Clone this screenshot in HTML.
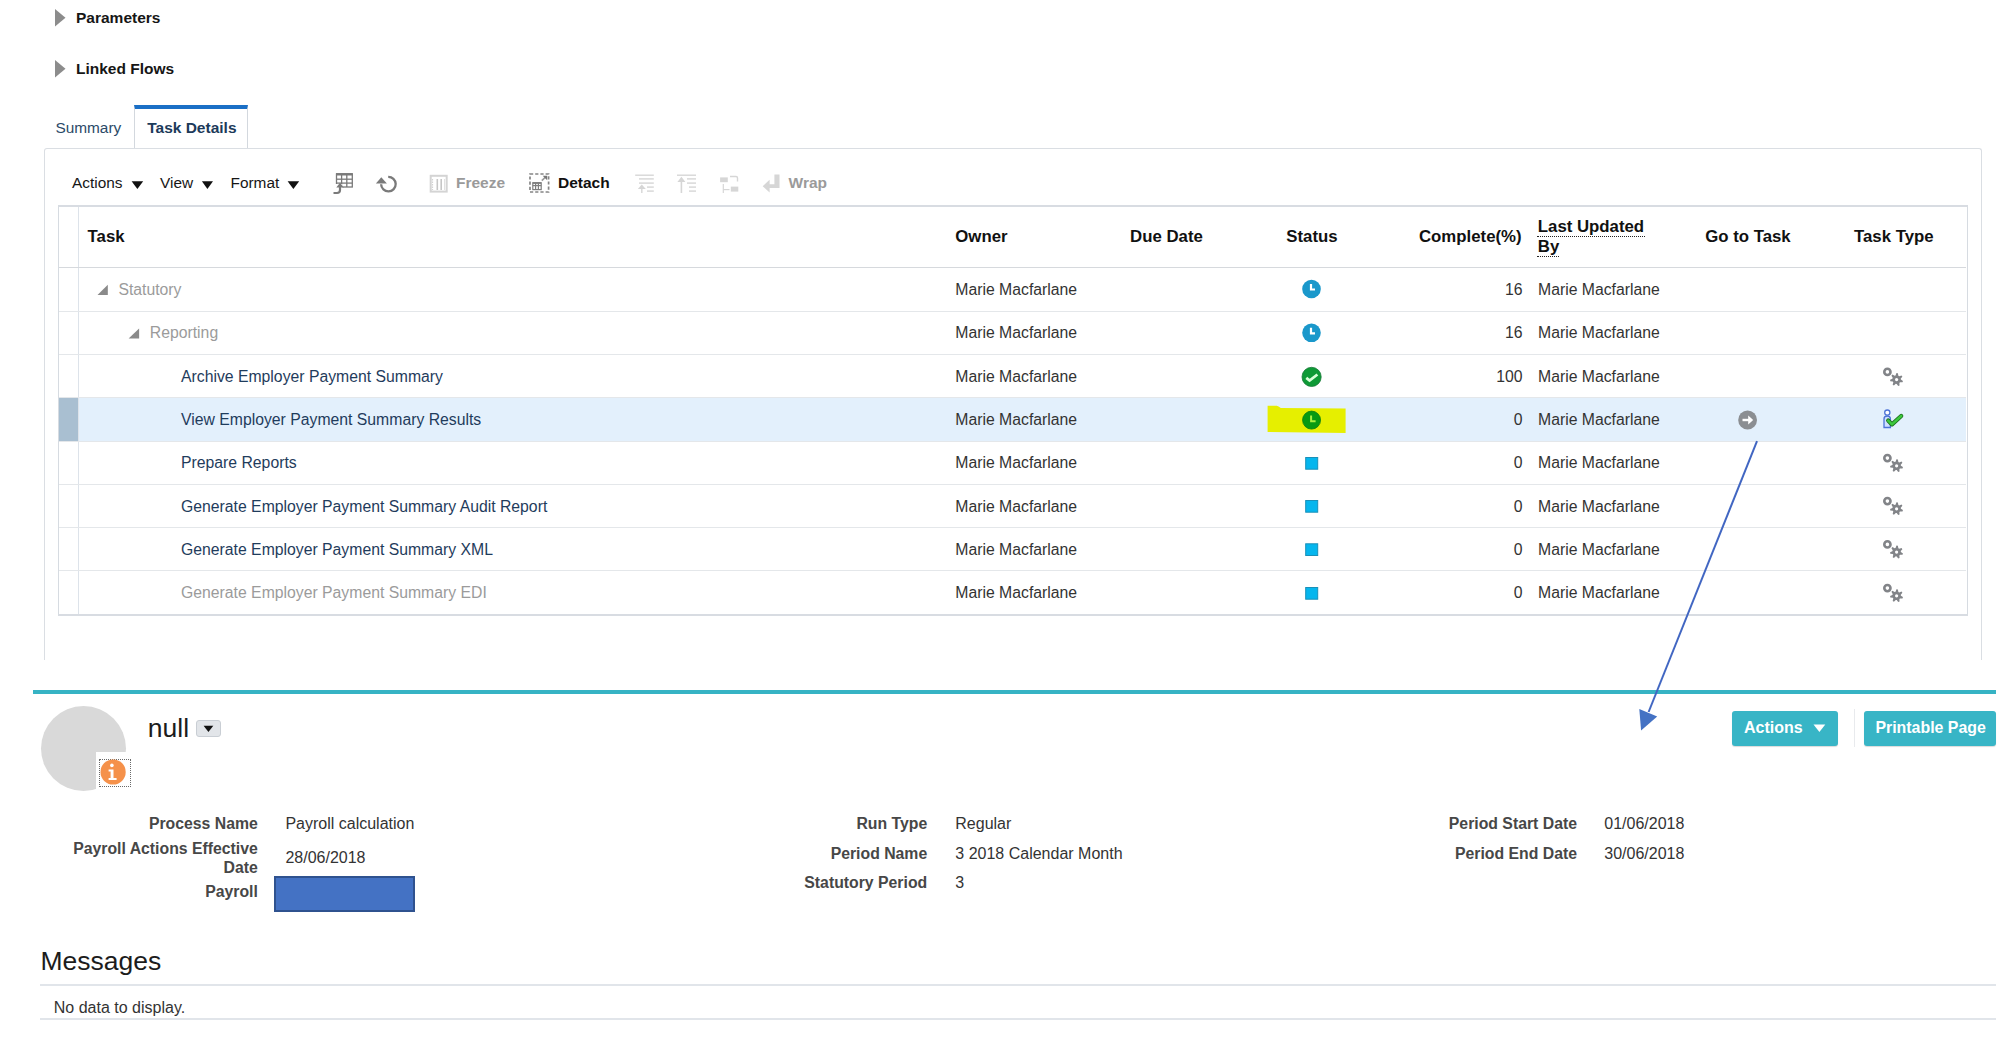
<!DOCTYPE html>
<html><head><meta charset="utf-8">
<style>
*{box-sizing:border-box;margin:0;padding:0}
html,body{width:2016px;height:1053px;overflow:hidden;background:#fff}
body{position:relative;font-family:"Liberation Sans",sans-serif;font-size:16px;color:#333}
.a{position:absolute}
.t{position:absolute;white-space:nowrap;line-height:20px;z-index:5}
.hl{position:absolute;height:1px;background:#e4e7ea}
svg.o{position:absolute;left:0;top:0;overflow:visible;z-index:4}
</style></head><body>

<svg class="o" width="1" height="1"><polygon points="55,9 65.5,17.7 55,26.5" fill="#8c8c8c"/><polygon points="55,60 65.5,68.7 55,77.5" fill="#8c8c8c"/></svg>
<div class="t" style="left:76px;top:8.3px;font-size:15.5px;font-weight:bold;color:#161616;">Parameters</div>
<div class="t" style="left:76px;top:58.7px;font-size:15.5px;font-weight:bold;color:#161616;">Linked Flows</div>
<div class="t" style="left:55.4px;top:118.1px;font-size:15.4px;color:#2c4a68;">Summary</div>
<div class="a" style="left:134px;top:105px;width:114px;height:43px;border:1px solid #d3d8de;border-bottom:none;border-top:4px solid #1a6fc6;background:#fff;z-index:2"></div>
<div class="t" style="left:147.2px;top:118.0px;font-size:15.5px;font-weight:bold;color:#1c3a5a;">Task Details</div>
<div class="a" style="left:44px;top:148px;width:1938px;height:512px;border:1px solid #dadee3;border-bottom:none;border-radius:3px 3px 0 0"></div>
<div class="t" style="left:72px;top:173.2px;font-size:15.4px;color:#161616;">Actions</div>
<div class="t" style="left:160px;top:173.2px;font-size:15.4px;color:#161616;">View</div>
<div class="t" style="left:230.5px;top:173.2px;font-size:15.4px;color:#161616;">Format</div>
<svg class="o" width="1" height="1"><polygon points="131.6,181.3 143.2,181.3 137.4,189" fill="#111"/><polygon points="201.9,181.3 213,181.3 207.4,189" fill="#111"/><polygon points="287.6,181.3 299.2,181.3 293.4,189" fill="#111"/></svg>
<div class="t" style="left:456px;top:173.1px;font-size:15.5px;font-weight:bold;color:#9a9a9a;">Freeze</div>
<div class="t" style="left:558px;top:173.1px;font-size:15.5px;font-weight:bold;color:#111;">Detach</div>
<div class="t" style="left:788.6px;top:173.1px;font-size:15.5px;font-weight:bold;color:#9a9a9a;">Wrap</div>
<svg class="o" width="1" height="1">
<g fill="none" stroke="#7a7a7a">
<rect x="336.5" y="174" width="15.8" height="13" stroke-width="1.3"/>
<line x1="336" y1="174.3" x2="352.8" y2="174.3" stroke-width="2.4"/>
<line x1="336.5" y1="179.2" x2="352.3" y2="179.2" stroke-width="1.3"/>
<line x1="336.5" y1="183.1" x2="352.3" y2="183.1" stroke-width="1.3"/>
<line x1="341.6" y1="174" x2="341.6" y2="187" stroke-width="1.3"/>
<line x1="346.8" y1="174" x2="346.8" y2="187" stroke-width="1.3"/>
</g>
<polygon points="335,184 342.5,184 342.5,189.5 335,189.5" fill="#fff"/>
<path d="M333.5 193 h3.5 q3 0 3 -3 v-4" fill="none" stroke="#7a7a7a" stroke-width="2.2"/>
<polygon points="336.3,187.5 343.7,187.5 340,182.8" fill="#7a7a7a"/>
<path d="M388.2 176.8 A7.3 7.3 0 1 1 381.1 184.3" fill="none" stroke="#7a7a7a" stroke-width="2.3"/>
<polygon points="375.9,183.6 386.9,183.6 381.3,177.2" fill="#7a7a7a"/>
<rect x="430.7" y="175.8" width="16" height="15.8" fill="none" stroke="#d4d4d4" stroke-width="2"/>
<line x1="432.6" y1="179" x2="432.6" y2="190" stroke="#cfcfcf" stroke-width="1" stroke-dasharray="1.5 1"/>
<line x1="437.3" y1="179" x2="437.3" y2="190" stroke="#c6c6c6" stroke-width="1.6"/>
<line x1="441.2" y1="179" x2="441.2" y2="190" stroke="#c6c6c6" stroke-width="1.6"/>
<line x1="444.6" y1="179" x2="444.6" y2="190" stroke="#dedede" stroke-width="1"/>
<rect x="530" y="174" width="18.6" height="18" fill="none" stroke="#858585" stroke-width="1.7" stroke-dasharray="3.2 2"/>
<g fill="none" stroke="#7f7f7f" stroke-width="1.2"><rect x="532.8" y="182.8" width="8.4" height="6.8"/><line x1="532.8" y1="185.6" x2="541.2" y2="185.6"/><line x1="535.6" y1="182.8" x2="535.6" y2="189.6"/><line x1="538.4" y1="182.8" x2="538.4" y2="189.6"/></g>
<line x1="532.8" y1="183" x2="541.2" y2="183" stroke="#7f7f7f" stroke-width="1.8"/>
<line x1="541.8" y1="180.6" x2="545.5" y2="177.2" stroke="#9a9a9a" stroke-width="1.6"/>
<polygon points="547.2,175.8 547.2,180.3 542.7,175.8" fill="#777"/>
<g stroke="#d6d6d6" stroke-width="1.4" fill="none">
<line x1="635.2" y1="175.2" x2="653.8" y2="175.2"/><line x1="639" y1="178.9" x2="653.8" y2="178.9"/><line x1="639" y1="183.1" x2="653.8" y2="183.1"/><line x1="647" y1="187.1" x2="653.8" y2="187.1"/><line x1="647" y1="191.1" x2="653.8" y2="191.1"/>
<line x1="641.8" y1="188" x2="641.8" y2="193"/>
<line x1="677" y1="175.2" x2="696" y2="175.2"/><line x1="687" y1="178.9" x2="696" y2="178.9"/><line x1="687" y1="183.1" x2="696" y2="183.1"/><line x1="689" y1="187.1" x2="696" y2="187.1"/><line x1="689" y1="191.1" x2="696" y2="191.1"/>
<line x1="681.4" y1="181" x2="681.4" y2="193" stroke-width="1.6"/>
<line x1="723.3" y1="184" x2="723.3" y2="193" stroke-width="1.2"/><line x1="723.3" y1="189.6" x2="729.5" y2="189.6" stroke-width="1.2"/>
<path d="M730 176.5 h6 q1.5 0 1.5 1.5 v3.5" stroke-width="1.4"/>
</g>
<polygon points="637.8,189 645.8,189 641.8,184.5" fill="#d6d6d6"/>
<polygon points="677.4,182 685.4,182 681.4,176.8" fill="#d6d6d6"/>
<rect x="720.1" y="177.4" width="7.7" height="4.8" fill="#d6d6d6"/>
<rect x="730.8" y="186.6" width="7.5" height="5" fill="#d6d6d6"/>
<path d="M774.4 174.6 h5.1 v13.4 h-10.8 v-3.8 h5.7 z" fill="#d6d6d6"/>
<polygon points="762.7,186.3 769.6,179.8 769.6,192.4" fill="#d6d6d6"/>
</svg>
<div class="a" style="left:58px;top:205px;width:1910px;height:411px;border:1px solid #d6dbe1;border-top:2px solid #d8dce2;border-bottom:2px solid #d8dce2"></div>
<div class="a" style="left:78px;top:207px;width:1px;height:407px;background:#dde3ea"></div>
<div class="hl" style="left:59px;top:267px;width:1907px;background:#d6d9dd"></div>
<div class="hl" style="left:59px;top:311px;width:1907px;background:#e4e7ea"></div>
<div class="hl" style="left:59px;top:354px;width:1907px;background:#e4e7ea"></div>
<div class="hl" style="left:59px;top:397px;width:1907px;background:#e4e7ea"></div>
<div class="hl" style="left:59px;top:441px;width:1907px;background:#e4e7ea"></div>
<div class="hl" style="left:59px;top:484px;width:1907px;background:#e4e7ea"></div>
<div class="hl" style="left:59px;top:527px;width:1907px;background:#e4e7ea"></div>
<div class="hl" style="left:59px;top:570px;width:1907px;background:#e4e7ea"></div>
<div class="a" style="left:59px;top:398px;width:19px;height:43px;background:#a9bfd1"></div>
<div class="a" style="left:79px;top:398px;width:1887px;height:43px;background:#e3f0fc"></div>
<div class="t" style="left:87.6px;top:226.6px;font-size:16.8px;font-weight:bold;color:#111;">Task</div>
<div class="t" style="left:955.3px;top:226.6px;font-size:16.8px;font-weight:bold;color:#111;">Owner</div>
<div class="t" style="left:1130.1px;top:226.6px;font-size:16.8px;font-weight:bold;color:#111;">Due Date</div>
<div class="t" style="left:1286.3px;top:226.6px;font-size:16.8px;font-weight:bold;color:#111;">Status</div>
<div class="t" style="left:1419px;top:226.6px;font-size:16.8px;font-weight:bold;color:#111;">Complete(%)</div>
<div class="t" style="left:1705.2px;top:226.6px;font-size:16.8px;font-weight:bold;color:#111;">Go to Task</div>
<div class="t" style="left:1854px;top:226.6px;font-size:16.8px;font-weight:bold;color:#111;">Task Type</div>
<div class="t" style="left:1537.8px;top:217.0px;font-size:16.8px;font-weight:bold;color:#111;">Last Updated</div>
<div class="t" style="left:1537.8px;top:236.5px;font-size:16.8px;font-weight:bold;color:#111;">By</div>
<div class="a" style="left:1537px;top:236px;width:108px;height:0;border-top:1px dotted #222"></div>
<div class="a" style="left:1537px;top:256px;width:22px;height:0;border-top:1px dotted #222"></div>
<svg class="o" width="1" height="1"><polygon points="107.8,284.7 107.8,294.9 97.5,294.9" fill="#8a8a8a"/><polygon points="139.1,328.4 139.1,338.5 128.6,338.5" fill="#8a8a8a"/></svg>
<div class="t" style="left:118.4px;top:279.7px;font-size:15.78px;color:#9b9b9b;">Statutory</div>
<div class="t" style="left:149.8px;top:323.4px;font-size:15.78px;color:#9b9b9b;">Reporting</div>
<div class="t" style="left:181px;top:366.9px;font-size:15.78px;color:#1f3c5c;">Archive Employer Payment Summary</div>
<div class="t" style="left:181px;top:410.1px;font-size:15.78px;color:#1f3c5c;">View Employer Payment Summary Results</div>
<div class="t" style="left:181px;top:453.3px;font-size:15.78px;color:#1f3c5c;">Prepare Reports</div>
<div class="t" style="left:181px;top:496.5px;font-size:15.78px;color:#1f3c5c;">Generate Employer Payment Summary Audit Report</div>
<div class="t" style="left:181px;top:540.0px;font-size:15.78px;color:#1f3c5c;">Generate Employer Payment Summary XML</div>
<div class="t" style="left:181px;top:583.1px;font-size:15.78px;color:#9b9b9b;">Generate Employer Payment Summary EDI</div>
<div class="t" style="left:955.3px;top:279.7px;font-size:15.78px;color:#333;">Marie Macfarlane</div>
<div class="t" style="right:493.5px;top:279.7px;font-size:15.78px;color:#333;">16</div>
<div class="t" style="left:1538px;top:279.7px;font-size:15.78px;color:#333;">Marie Macfarlane</div>
<div class="t" style="left:955.3px;top:323.4px;font-size:15.78px;color:#333;">Marie Macfarlane</div>
<div class="t" style="right:493.5px;top:323.4px;font-size:15.78px;color:#333;">16</div>
<div class="t" style="left:1538px;top:323.4px;font-size:15.78px;color:#333;">Marie Macfarlane</div>
<div class="t" style="left:955.3px;top:366.9px;font-size:15.78px;color:#333;">Marie Macfarlane</div>
<div class="t" style="right:493.5px;top:366.9px;font-size:15.78px;color:#333;">100</div>
<div class="t" style="left:1538px;top:366.9px;font-size:15.78px;color:#333;">Marie Macfarlane</div>
<div class="t" style="left:955.3px;top:410.1px;font-size:15.78px;color:#333;">Marie Macfarlane</div>
<div class="t" style="right:493.5px;top:410.1px;font-size:15.78px;color:#333;">0</div>
<div class="t" style="left:1538px;top:410.1px;font-size:15.78px;color:#333;">Marie Macfarlane</div>
<div class="t" style="left:955.3px;top:453.3px;font-size:15.78px;color:#333;">Marie Macfarlane</div>
<div class="t" style="right:493.5px;top:453.3px;font-size:15.78px;color:#333;">0</div>
<div class="t" style="left:1538px;top:453.3px;font-size:15.78px;color:#333;">Marie Macfarlane</div>
<div class="t" style="left:955.3px;top:496.5px;font-size:15.78px;color:#333;">Marie Macfarlane</div>
<div class="t" style="right:493.5px;top:496.5px;font-size:15.78px;color:#333;">0</div>
<div class="t" style="left:1538px;top:496.5px;font-size:15.78px;color:#333;">Marie Macfarlane</div>
<div class="t" style="left:955.3px;top:540.0px;font-size:15.78px;color:#333;">Marie Macfarlane</div>
<div class="t" style="right:493.5px;top:540.0px;font-size:15.78px;color:#333;">0</div>
<div class="t" style="left:1538px;top:540.0px;font-size:15.78px;color:#333;">Marie Macfarlane</div>
<div class="t" style="left:955.3px;top:583.1px;font-size:15.78px;color:#333;">Marie Macfarlane</div>
<div class="t" style="right:493.5px;top:583.1px;font-size:15.78px;color:#333;">0</div>
<div class="t" style="left:1538px;top:583.1px;font-size:15.78px;color:#333;">Marie Macfarlane</div>
<svg class="o" width="1" height="1">
<circle cx="1311.5" cy="289" r="9.3" fill="#1a98cb"/><path d="M1311 284v5.5h4" stroke="#fff" stroke-width="2.2" fill="none"/>
<circle cx="1311.5" cy="332.8" r="9.3" fill="#1a98cb"/><path d="M1311 327.8v5.5h4" stroke="#fff" stroke-width="2.2" fill="none"/>
<circle cx="1311.6" cy="376.9" r="9.6" fill="#0e9a36" stroke="#1b7a3a" stroke-width="0.8"/><path d="M1306.3 377.8l3.3 2.7 7.8 -6" stroke="#d8ffd8" stroke-width="2.8" fill="none"/>
<path d="M1267.6 405.8 L1276.7 405.8 Q1278.5 406.2 1280.8 408 L1345.6 408.4 L1345.6 433 L1267.6 432 Z" fill="#e6ef00"/>
<circle cx="1311.55" cy="420.1" r="9" fill="#079a12" stroke="#0b7d10" stroke-width="0.8"/><path d="M1311.1 415.4v5.9h4.5" stroke="#a8f040" stroke-width="2" fill="none"/>
<rect x="1305.7" y="457.5" width="12" height="11.7" fill="#05b6ee" stroke="#1a90b8" stroke-width="1"/>
<rect x="1305.7" y="500.5" width="12" height="11.7" fill="#05b6ee" stroke="#1a90b8" stroke-width="1"/>
<rect x="1305.7" y="543.8" width="12" height="11.7" fill="#05b6ee" stroke="#1a90b8" stroke-width="1"/>
<rect x="1305.7" y="587.5" width="12" height="11.7" fill="#05b6ee" stroke="#1a90b8" stroke-width="1"/>
</svg>
<svg class="o" width="1" height="1"><circle cx="1887.4" cy="371.9" r="3.1" fill="none" stroke="#828488" stroke-width="2.6"/><polygon points="1902.97,380.89 1902.52,382.28 1900.02,382.19 1899.36,382.89 1899.56,385.39 1898.20,385.90 1896.70,383.89 1895.75,383.80 1893.92,385.52 1892.67,384.78 1893.31,382.36 1892.78,381.56 1890.30,381.20 1890.10,379.76 1892.40,378.75 1892.69,377.83 1891.42,375.67 1892.42,374.62 1894.64,375.78 1895.54,375.44 1896.44,373.10 1897.89,373.23 1898.37,375.69 1899.19,376.18 1901.58,375.42 1902.39,376.64 1900.76,378.54 1900.89,379.50" fill="#828488"/><circle cx="1896.6" cy="379.59999999999997" r="1.6" fill="#fff"/><circle cx="1887.4" cy="458.1" r="3.1" fill="none" stroke="#828488" stroke-width="2.6"/><polygon points="1902.97,467.09 1902.52,468.48 1900.02,468.39 1899.36,469.09 1899.56,471.59 1898.20,472.10 1896.70,470.09 1895.75,470.00 1893.92,471.72 1892.67,470.98 1893.31,468.56 1892.78,467.76 1890.30,467.40 1890.10,465.96 1892.40,464.95 1892.69,464.03 1891.42,461.87 1892.42,460.82 1894.64,461.98 1895.54,461.64 1896.44,459.30 1897.89,459.43 1898.37,461.89 1899.19,462.38 1901.58,461.62 1902.39,462.84 1900.76,464.74 1900.89,465.70" fill="#828488"/><circle cx="1896.6" cy="465.8" r="1.6" fill="#fff"/><circle cx="1887.4" cy="501.1" r="3.1" fill="none" stroke="#828488" stroke-width="2.6"/><polygon points="1902.97,510.09 1902.52,511.48 1900.02,511.39 1899.36,512.09 1899.56,514.59 1898.20,515.10 1896.70,513.09 1895.75,513.00 1893.92,514.72 1892.67,513.98 1893.31,511.56 1892.78,510.76 1890.30,510.40 1890.10,508.96 1892.40,507.95 1892.69,507.03 1891.42,504.87 1892.42,503.82 1894.64,504.98 1895.54,504.64 1896.44,502.30 1897.89,502.43 1898.37,504.89 1899.19,505.38 1901.58,504.62 1902.39,505.84 1900.76,507.74 1900.89,508.70" fill="#828488"/><circle cx="1896.6" cy="508.8" r="1.6" fill="#fff"/><circle cx="1887.4" cy="544.4" r="3.1" fill="none" stroke="#828488" stroke-width="2.6"/><polygon points="1902.97,553.39 1902.52,554.78 1900.02,554.69 1899.36,555.39 1899.56,557.89 1898.20,558.40 1896.70,556.39 1895.75,556.30 1893.92,558.02 1892.67,557.28 1893.31,554.86 1892.78,554.06 1890.30,553.70 1890.10,552.26 1892.40,551.25 1892.69,550.33 1891.42,548.17 1892.42,547.12 1894.64,548.28 1895.54,547.94 1896.44,545.60 1897.89,545.73 1898.37,548.19 1899.19,548.68 1901.58,547.92 1902.39,549.14 1900.76,551.04 1900.89,552.00" fill="#828488"/><circle cx="1896.6" cy="552.1" r="1.6" fill="#fff"/><circle cx="1887.4" cy="588.1" r="3.1" fill="none" stroke="#828488" stroke-width="2.6"/><polygon points="1902.97,597.09 1902.52,598.48 1900.02,598.39 1899.36,599.09 1899.56,601.59 1898.20,602.10 1896.70,600.09 1895.75,600.00 1893.92,601.72 1892.67,600.98 1893.31,598.56 1892.78,597.76 1890.30,597.40 1890.10,595.96 1892.40,594.95 1892.69,594.03 1891.42,591.87 1892.42,590.82 1894.64,591.98 1895.54,591.64 1896.44,589.30 1897.89,589.43 1898.37,591.89 1899.19,592.38 1901.58,591.62 1902.39,592.84 1900.76,594.74 1900.89,595.70" fill="#828488"/><circle cx="1896.6" cy="595.8000000000001" r="1.6" fill="#fff"/>
<circle cx="1747.6" cy="420" r="9.4" fill="#8b8e92"/>
<path d="M1742.5 420 h8" stroke="#fff" stroke-width="2.4"/><polygon points="1748.2,415.6 1753.2,420 1748.2,424.4" fill="#fff"/>
<circle cx="1887.3" cy="412.6" r="2.6" fill="#fff" stroke="#4d73d6" stroke-width="1.3"/>
<path d="M1884 427.5 v-8.5 q0 -3 3.2 -3 q3.2 0 3.2 3 v8.5 z" fill="#cfe0ff" stroke="#4d73d6" stroke-width="1.3"/>
<path d="M1888.2 420.6 l3.8 3.8 l9.2 -8.4" fill="none" stroke="#1b6e1b" stroke-width="4.2" stroke-linecap="round" stroke-linejoin="round"/>
<path d="M1888.2 420.6 l3.8 3.8 l9.2 -8.4" fill="none" stroke="#3cc83c" stroke-width="2.6" stroke-linecap="round" stroke-linejoin="round"/>
</svg>
<div class="a" style="left:33px;top:690px;width:1963px;height:4px;background:#36b3c4"></div>
<div class="a" style="left:40.5px;top:706px;width:85px;height:85px;border-radius:50%;background:#d9d9d9"></div>
<div class="a" style="left:96px;top:752px;width:38px;height:38px;background:#fff"></div>
<div class="a" style="left:98.5px;top:759px;width:32px;height:27.5px;border:1px dotted #6a6a6a;background:#fff"></div>
<svg class="o" width="1" height="1"><circle cx="113.1" cy="772" r="12.6" fill="#f5914a"/><circle cx="111.9" cy="765.4" r="1.8" fill="#fff"/><path d="M108.6 769.6h4.9v8.5h3.1v1.8h-8v-1.8h2v-6.7h-2z" fill="#fff"/></svg>
<div class="t" style="left:147.8px;top:718.4px;font-size:26.5px;color:#1c1c1c;">null</div>
<div class="a" style="left:196px;top:719.5px;width:25px;height:17px;background:#e2e5e9;border:1px solid #c9ced4;border-radius:3px"></div>
<svg class="o" width="1" height="1"><polygon points="203.6,725.8 213.3,725.8 208.45,732" fill="#111"/></svg>
<div class="a" style="left:1732px;top:711px;width:105.5px;height:35px;background:#38b5c6;border-radius:3px;box-shadow:0 1px 1px rgba(0,0,0,0.15)"></div>
<div class="t" style="left:1744px;top:718.3px;font-size:16px;font-weight:bold;color:#fff;">Actions</div>
<svg class="o" width="1" height="1"><polygon points="1813.5,724.5 1825.3,724.5 1819.4,732" fill="#fff"/></svg>
<div class="a" style="left:1854px;top:709px;width:1px;height:38px;background:#e8eaed"></div>
<div class="a" style="left:1863.5px;top:711px;width:132px;height:35px;background:#38b5c6;border-radius:3px;box-shadow:0 1px 1px rgba(0,0,0,0.15)"></div>
<div class="t" style="left:1875.4px;top:718.3px;font-size:15.9px;font-weight:bold;color:#fff;">Printable Page</div>
<div class="t" style="right:1758.2px;top:814.3px;font-size:15.8px;font-weight:bold;color:#474747;">Process Name</div>
<div class="t" style="right:1758.2px;top:838.7px;font-size:15.8px;font-weight:bold;color:#474747;">Payroll Actions Effective</div>
<div class="t" style="right:1758.2px;top:858.0px;font-size:15.8px;font-weight:bold;color:#474747;">Date</div>
<div class="t" style="right:1758.2px;top:881.9px;font-size:15.8px;font-weight:bold;color:#474747;">Payroll</div>
<div class="t" style="left:285.4px;top:814.3px;font-size:16px;color:#333;">Payroll calculation</div>
<div class="t" style="left:285.4px;top:847.9px;font-size:16px;color:#333;">28/06/2018</div>
<div class="a" style="left:274px;top:876px;width:141px;height:36px;background:#4472c4;border:2px solid #2f528f"></div>
<div class="t" style="right:1088.8px;top:814.4px;font-size:15.8px;font-weight:bold;color:#474747;">Run Type</div>
<div class="t" style="right:1088.8px;top:843.9px;font-size:15.8px;font-weight:bold;color:#474747;">Period Name</div>
<div class="t" style="right:1088.8px;top:873.1px;font-size:15.8px;font-weight:bold;color:#474747;">Statutory Period</div>
<div class="t" style="left:955.3px;top:814.4px;font-size:16px;color:#333;">Regular</div>
<div class="t" style="left:955.3px;top:843.9px;font-size:16px;color:#333;">3 2018 Calendar Month</div>
<div class="t" style="left:955.3px;top:873.1px;font-size:16px;color:#333;">3</div>
<div class="t" style="right:439px;top:814.4px;font-size:15.8px;font-weight:bold;color:#474747;">Period Start Date</div>
<div class="t" style="right:439px;top:843.6px;font-size:15.8px;font-weight:bold;color:#474747;">Period End Date</div>
<div class="t" style="left:1604.3px;top:814.4px;font-size:16px;color:#333;">01/06/2018</div>
<div class="t" style="left:1604.3px;top:843.6px;font-size:16px;color:#333;">30/06/2018</div>
<div class="t" style="left:40.5px;top:950.7px;font-size:26.5px;color:#1c1c1c;">Messages</div>
<div class="hl" style="left:40px;top:984px;width:1956px;height:2px;background:#e1e5ea"></div>
<div class="t" style="left:53.8px;top:998.2px;font-size:16px;color:#333;">No data to display.</div>
<div class="hl" style="left:40px;top:1018px;width:1956px;height:2px;background:#e1e5ea"></div>
<svg class="o" width="1" height="1" style="z-index:9">
<line x1="1757" y1="441.2" x2="1648.6" y2="712" stroke="#4166c2" stroke-width="2"/>
<polygon points="1641.1,730.5 1639.3,708.9 1657.2,716.4" fill="#4472c4"/>
</svg>
</body></html>
